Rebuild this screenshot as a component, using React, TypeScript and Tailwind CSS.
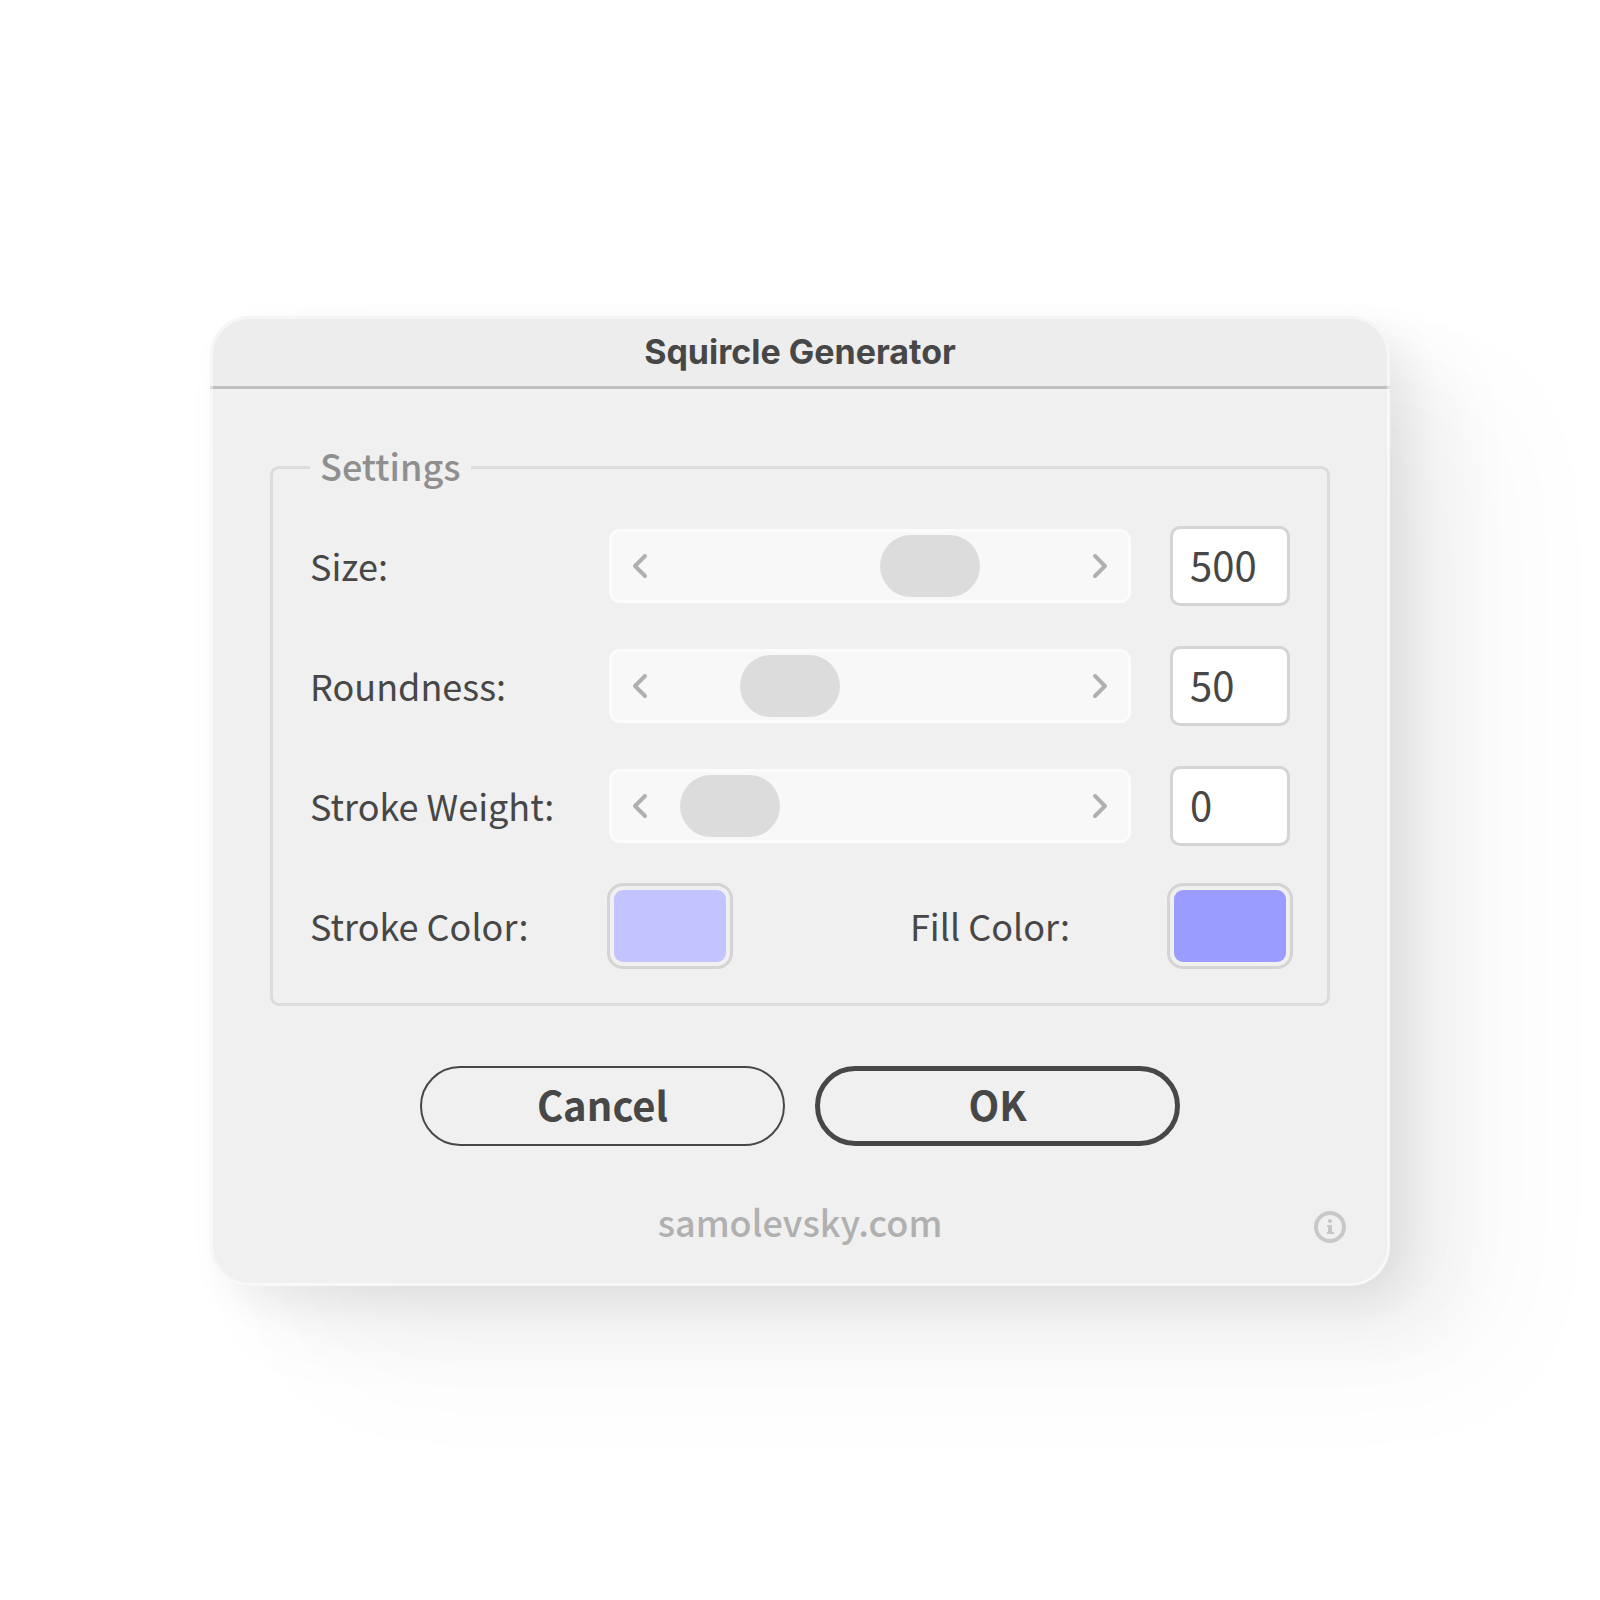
import { useState } from 'react'

type SliderRowProps = {
	id: string
	label: string
	max: number
	initial: number
}

function Chevron({ direction }: { direction: 'left' | 'right' }) {
	return (
		<svg width="24" height="32" viewBox="0 0 24 32" fill="none" stroke="#b0b0b0" strokeWidth="4" aria-hidden="true">
			<path
				d={direction === 'left' ? 'M17 6L7 16l10 10' : 'M7 6l10 10L7 26'}
				strokeLinecap="round"
				strokeLinejoin="round"
			/>
		</svg>
	)
}

function SliderRow({ id, label, max, initial }: SliderRowProps) {
	const [value, setValue] = useState(initial)

	const update = (next: number) => setValue(Math.min(max, Math.max(0, next || 0)))

	return (
		<div className="flex h-20 items-center">
			<label htmlFor={id} className="w-[300px] shrink-0 pb-0.5 text-[36px] leading-[52px]">
				{label}
			</label>
			<div className="mr-10 flex h-[72px] min-w-0 flex-1 items-center rounded-[10px] bg-[#f8f8f8] outline-[3px] -outline-offset-2 outline-[#fcfcfc]">
				<button
					type="button"
					aria-label={`Decrease ${label}`}
					onClick={() => update(value - 1)}
					className="flex h-full w-[60px] shrink-0 items-center justify-center"
				>
					<Chevron direction="left" />
				</button>
				<input
					type="range"
					aria-label={label}
					min={0}
					max={max}
					value={value}
					onChange={(e) => update(Number(e.target.value))}
					className="mx-[10px] h-[62px] min-w-0 flex-1 appearance-none bg-transparent [&::-webkit-slider-thumb]:h-[62px] [&::-webkit-slider-thumb]:w-[100px] [&::-webkit-slider-thumb]:appearance-none [&::-webkit-slider-thumb]:rounded-[31px] [&::-webkit-slider-thumb]:bg-[#dcdcdc]"
				/>
				<button
					type="button"
					aria-label={`Increase ${label}`}
					onClick={() => update(value + 1)}
					className="flex h-full w-[60px] shrink-0 items-center justify-center"
				>
					<Chevron direction="right" />
				</button>
			</div>
			<input
				id={id}
				type="text"
				inputMode="numeric"
				value={value}
				onChange={(e) => update(Number(e.target.value))}
				className="h-20 w-[120px] shrink-0 rounded-[10px] border-[3px] border-[#d4d4d4] bg-white pb-1 pl-[17px] text-[40px]"
			/>
		</div>
	)
}

function ColorWell({ id, initial }: { id: string; initial: string }) {
	const [color, setColor] = useState(initial)

	return (
		<input
			id={id}
			type="color"
			value={color}
			onChange={(e) => setColor(e.target.value)}
			className="h-20 w-[120px] shrink-0 appearance-none rounded-[13px] bg-transparent p-1 outline-[3px] outline-[#d4d4d4] [&::-webkit-color-swatch]:rounded-[9px] [&::-webkit-color-swatch]:border-0 [&::-webkit-color-swatch-wrapper]:p-0"
		/>
	)
}

export default function App() {
	return (
		<main className="flex min-h-screen items-center justify-center bg-white px-10 pt-[42px] pb-10 font-['Noto_Sans_CJK_SC','Noto_Sans',sans-serif] text-[#474747]">
			<form
				onSubmit={(e) => e.preventDefault()}
				className="relative w-full max-w-[1180px] rounded-[40px] bg-[#f0f0f0] shadow-[16px_16px_40px_rgba(0,0,0,0.06),54px_44px_80px_rgba(0,0,0,0.05),110px_80px_140px_rgba(0,0,0,0.03)] after:pointer-events-none after:absolute after:inset-0 after:rounded-[40px] after:border-[3px] after:border-white/50"
			>
				<header className="flex h-[73px] items-center justify-center rounded-t-[40px] border-b-[3px] border-[#bfbfbf] bg-[#ededed]">
					<h1 className="font-['Inter','Liberation_Sans',sans-serif] text-[34px] font-bold">Squircle Generator</h1>
				</header>

				<div className="px-[60px] pt-[50px] pb-[39px]">
					<fieldset className="rounded-[9px] border-[3px] border-[#dcdcdc] px-[37px] pb-[37px]">
						<legend className="px-[10px] pb-1 text-[36px] leading-[52px] font-medium text-[#8f8f8f]">Settings</legend>
						<div className="flex flex-col gap-10 pt-[31px]">
							<SliderRow id="size" label="Size:" max={700} initial={500} />
							<SliderRow id="roundness" label="Roundness:" max={233} initial={50} />
							<SliderRow id="stroke-weight" label="Stroke Weight:" max={100} initial={0} />
							<div className="flex h-20 items-center">
								<label htmlFor="stroke-color" className="w-[300px] shrink-0 pb-0.5 text-[36px] leading-[52px]">
									Stroke Color:
								</label>
								<ColorWell id="stroke-color" initial="#c2c3ff" />
								<label htmlFor="fill-color" className="ml-auto w-[260px] pb-0.5 text-[36px] leading-[52px]">
									Fill Color:
								</label>
								<ColorWell id="fill-color" initial="#9a9dff" />
							</div>
						</div>
					</fieldset>

					<div className="mt-[60px] flex justify-center gap-[30px] text-[40px] leading-none font-bold">
						<button type="button" className="h-20 w-[365px] rounded-full border-2 border-[#474747] pb-1">
							Cancel
						</button>
						<button type="submit" className="h-20 w-[365px] rounded-full border-[5px] border-[#474747] pb-1">
							OK
						</button>
					</div>

					<footer className="mt-[49px] grid grid-cols-[1fr_auto_1fr] items-end">
						<a href="#samolevsky" className="col-start-2 text-[36px] leading-[52px] font-medium text-[#b0b0b0]">
							samolevsky.com
						</a>
						<button type="button" aria-label="About" className="-mr-4 mb-1 justify-self-end">
							<svg width="32" height="32" viewBox="0 0 32 32" fill="#c6c6c6" aria-hidden="true">
								<circle cx="16" cy="16" r="14" fill="none" stroke="#c8c8c8" strokeWidth="4" />
								<circle cx="16" cy="10" r="2" />
								<path d="M13 14h5v7h2v2h-7v-2h1v-5h-1z" />
							</svg>
						</button>
					</footer>
				</div>
			</form>
		</main>
	)
}
